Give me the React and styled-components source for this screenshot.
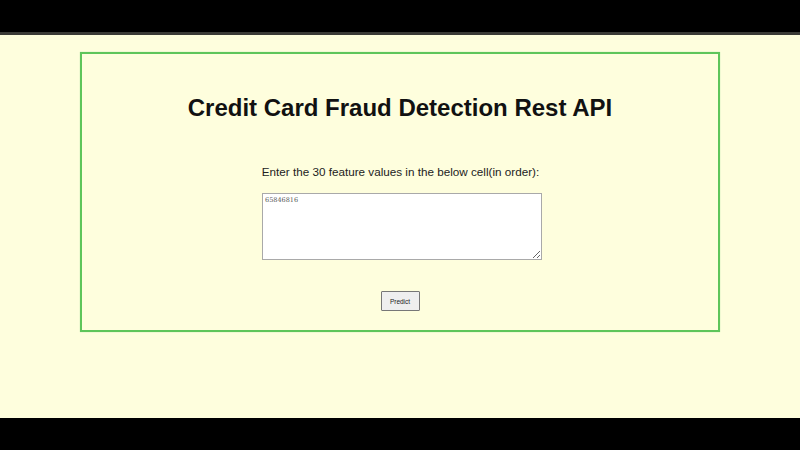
import React from "react";
import styled, { createGlobalStyle } from "styled-components";

const Global = createGlobalStyle`
  html, body { margin: 0; padding: 0; }
  body { width: 800px; height: 450px; overflow: hidden; background: #000; font-family: "Liberation Sans", Arial, sans-serif; }
`;

const Frame = styled.div`
  width: 800px;
  height: 450px;
  display: flex;
  flex-direction: column;
  background: #000;
`;

const TopBar = styled.div`
  height: 32px;
  background: #000;
  border-bottom: 3px solid #3a3a36;
  flex: none;
`;

const Page = styled.main`
  flex: none;
  height: 383px;
  background: #fefedd;
  padding-top: 17px;
  box-sizing: border-box;
  display: flex;
  justify-content: center;
  align-items: flex-start;
`;

const Panel = styled.section`
  width: 640px;
  height: 280px;
  box-sizing: border-box;
  border: 2px solid #5ec55a;
  box-shadow: 0 0 1px #a8e0a0;
  display: flex;
  flex-direction: column;
  align-items: center;
`;

const Title = styled.h1`
  margin: 40px 0 0;
  font-size: 24px;
  line-height: 28px;
  font-weight: 700;
  color: #111;
  letter-spacing: 0;
`;

const Label = styled.p`
  margin: 43px 0 0 1px;
  font-size: 11.7px;
  line-height: 14px;
  color: #222;
`;

const Field = styled.textarea`
  margin: 14px 0 0 4px;
  width: 280px;
  height: 67px;
  box-sizing: border-box;
  border: 1px solid #a9a9a9;
  background: #fff;
  padding: 2px 2px;
  font-family: "DejaVu Serif", "Liberation Serif", serif;
  font-size: 6.5px;
  color: #555;
  resize: vertical;
  outline: none;
`;

const Button = styled.button`
  margin-top: 31px;
  width: 39px;
  height: 20px;
  box-sizing: border-box;
  border: 1px solid #777;
  border-radius: 1px;
  background: #efefef;
  font-family: "Liberation Sans", Arial, sans-serif;
  font-size: 6.5px;
  color: #222;
  padding: 0;
`;

const BottomBar = styled.div`
  flex: 1;
  background: #000;
`;

export default function App() {
  return (
    <>
      <Global />
      <Frame>
        <TopBar />
        <Page>
          <Panel>
            <Title>Credit Card Fraud Detection Rest API</Title>
            <Label>Enter the 30 feature values in the below cell(in order):</Label>
            <Field defaultValue="65846816" />
            <Button type="button">Predict</Button>
          </Panel>
        </Page>
        <BottomBar />
      </Frame>
    </>
  );
}
